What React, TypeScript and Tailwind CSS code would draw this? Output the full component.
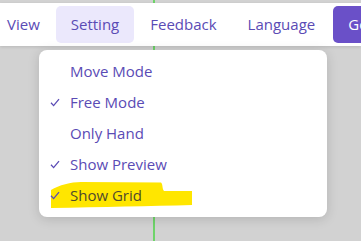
import React from 'react';

const items = [
  { label: 'Move Mode', checked: false },
  { label: 'Free Mode', checked: true },
  { label: 'Only Hand', checked: false },
  { label: 'Show Preview', checked: true },
  { label: 'Show Grid', checked: true, marked: true },
];

function Check() {
  return (
    <svg width="10" height="9" viewBox="0 0 10 9" fill="none" className="shrink-0">
      <path d="M1 4.8 L3.6 7.6 L9 1.2" stroke="currentColor" strokeWidth="1.3" />
    </svg>
  );
}

export default function App() {
  return (
    <div
      className="relative w-[361px] h-[241px] overflow-hidden bg-[#d2d2d2]"
      style={{ fontFamily: '"Open Sans", "Liberation Sans", sans-serif' }}
    >
      {/* canvas guide line */}
      <div className="absolute left-[153px] top-0 w-[2px] h-full bg-[#6fd46a]" />

      {/* top menu bar */}
      <div className="relative mt-[3px] h-[43px] bg-white shadow-[0_1px_3px_rgba(0,0,0,0.12)] flex items-center">
        <div className="flex items-center gap-px ml-[-8px] text-[15px] text-[#5a4bb5]">
          <button className="h-[37px] px-[15px] rounded-[5px]">View</button>
          <button className="h-[37px] px-[15px] rounded-[5px] bg-[#ebe8fc]">Setting</button>
          <button className="h-[37px] px-[15px] rounded-[5px]">Feedback</button>
          <button className="h-[37px] px-[15px] rounded-[5px]">Language</button>
          <button className="ml-[2px] h-[37px] px-[15px] rounded-[5px] bg-[#6a50c8] text-white">Go</button>
        </div>
      </div>

      {/* dropdown */}
      <div className="absolute left-[39px] top-[50px] w-[288px] h-[167px] bg-white rounded-[8px] shadow-[0_2px_12px_rgba(0,0,0,0.15)] pt-[6px]">
        {items.map((it) => (
          <div key={it.label} className="relative h-[31px] flex items-center text-[15px] text-[#5a4bb5]">
            {it.marked && (
              <svg className="absolute left-[12px] top-0 overflow-visible" width="142" height="30" viewBox="0 0 142 30">
                <path
                  d="M0 10 C8 5 20 2 30 2 L110 2.5 C112 4 111 9 113 11 L141 11 L141 25 C100 26 50 27 0 28 Z"
                  fill="#ffe600"
                />
              </svg>
            )}
            <span className="relative w-[31px] flex justify-end pr-[10px] text-[#5a4bb5]">
              {it.checked && <Check />}
            </span>
            <span className={`relative ${it.marked ? 'text-[#4f4a2e]' : ''}`}>{it.label}</span>
          </div>
        ))}
      </div>
    </div>
  );
}
